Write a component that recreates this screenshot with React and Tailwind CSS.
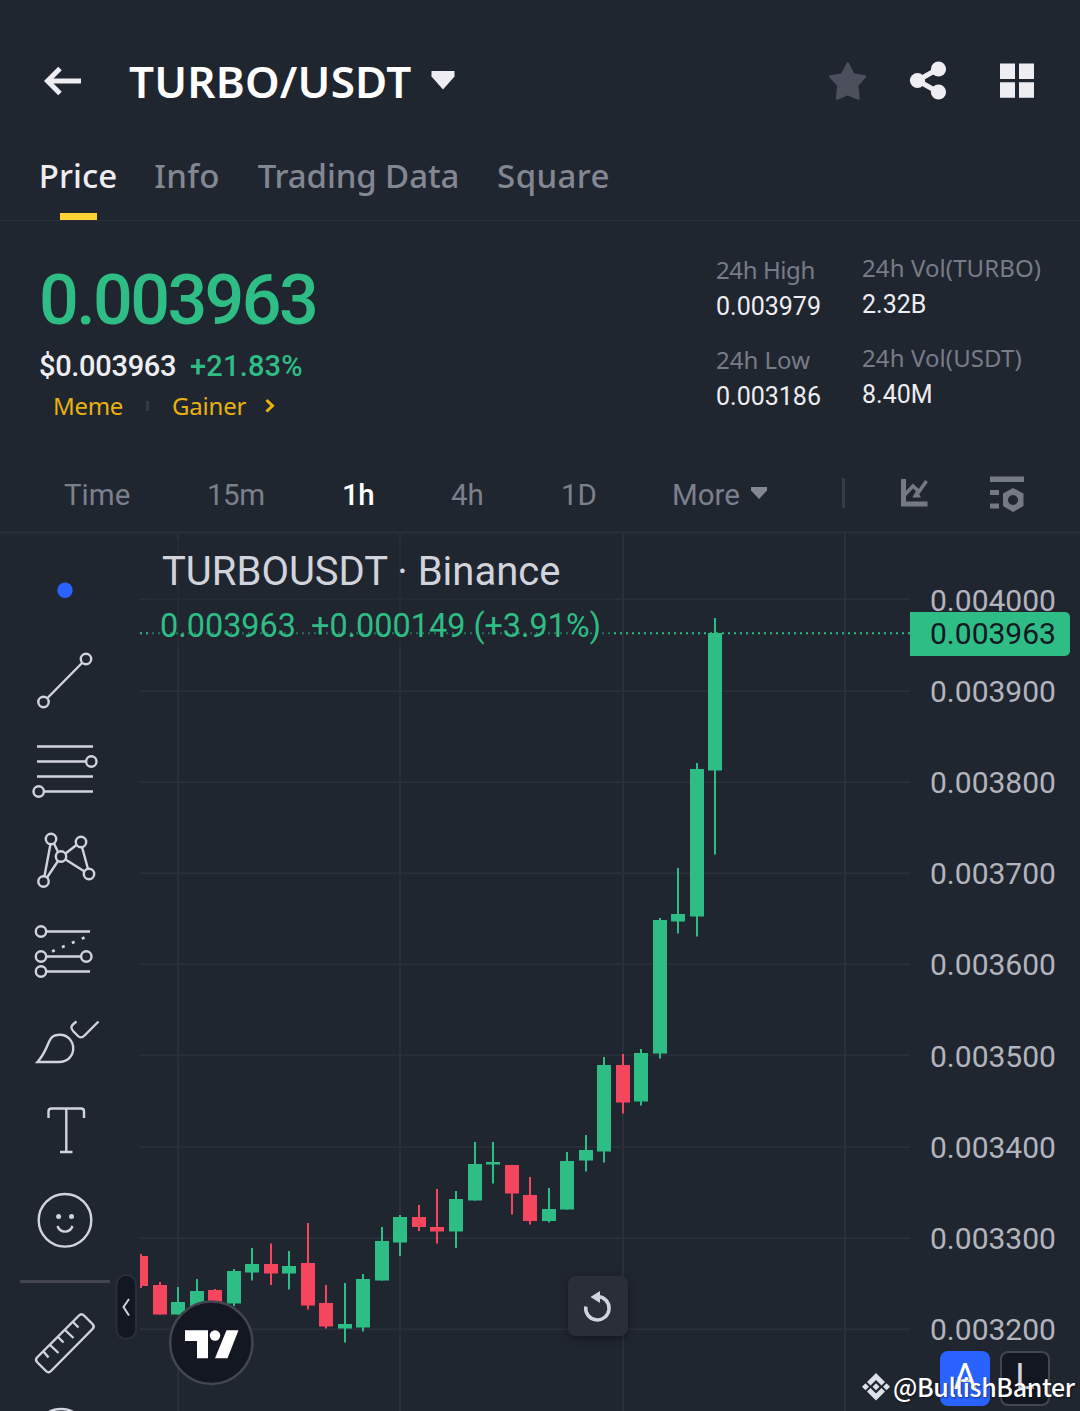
import clsx from "clsx";

const GREEN = "#2ebd85";
const RED = "#f6465d";

// [x, wick top, body top, body bottom, wick bottom, direction]
const candles = [
  [141, 1254, 1256, 1286, 1288, "down"],
  [160, 1282, 1285, 1314.5, 1314.5, "down"],
  [178, 1287, 1302, 1314.5, 1314.5, "up"],
  [197, 1279, 1291, 1308, 1308, "up"],
  [215, 1289, 1290, 1304, 1304, "down"],
  [234, 1269, 1271, 1303.5, 1306, "up"],
  [252, 1248, 1264, 1272.5, 1280.5, "up"],
  [271, 1243.5, 1264, 1273.5, 1285, "down"],
  [289, 1251, 1266, 1273.5, 1289.5, "up"],
  [308, 1223, 1263, 1305.5, 1309.5, "down"],
  [326, 1285, 1303, 1326.5, 1328.5, "down"],
  [345, 1283, 1324, 1328.5, 1342.5, "up"],
  [363, 1274, 1279, 1327.5, 1331.5, "up"],
  [382, 1227, 1241, 1280.5, 1280.5, "up"],
  [400, 1215, 1217, 1242.5, 1256, "up"],
  [419, 1205, 1217, 1227, 1231, "down"],
  [437, 1189, 1227, 1231.5, 1243.5, "down"],
  [456, 1191, 1199, 1231.5, 1248, "up"],
  [475, 1142, 1164, 1200.5, 1200.5, "up"],
  [493, 1142, 1162, 1164.5, 1183.5, "up"],
  [512, 1165, 1165, 1193.5, 1214.5, "down"],
  [530, 1177, 1195, 1221, 1224.5, "down"],
  [549, 1188, 1209, 1221, 1222.5, "up"],
  [567, 1152, 1161, 1209.5, 1209.5, "up"],
  [586, 1135, 1150, 1160.5, 1171.5, "up"],
  [604, 1057, 1065, 1151.5, 1162.5, "up"],
  [623, 1054, 1065, 1102.5, 1113.5, "down"],
  [641, 1049, 1053, 1101.5, 1105.5, "up"],
  [660, 918, 920, 1053.5, 1058.5, "up"],
  [678, 868, 914, 921.5, 933.5, "up"],
  [697, 763, 769, 916.5, 936.5, "up"],
  [715, 618, 633, 770.5, 854.5, "up"],
];

const gridX = [178, 400, 623, 845];
const gridY = [599.4, 691.2, 782.2, 873.2, 964.4, 1055.4, 1147, 1238.2, 1329.2];

const axisLabels = [
  "0.004000",
  "0.003900",
  "0.003800",
  "0.003700",
  "0.003600",
  "0.003500",
  "0.003400",
  "0.003300",
  "0.003200",
];

const tabs = [
  { label: "Price", className: "w-[78px] tracking-[0.1px]", active: true },
  { label: "Info", className: "w-[66px] tracking-[0.3px]" },
  { label: "Trading Data", className: "w-[203px] tracking-[-0.100px]" },
  { label: "Square", className: "w-[113px] tracking-[0.4px]" },
];

const intervals = [
  { label: "Time", className: "w-[143px]" },
  { label: "15m", className: "w-[135px] tracking-[-0.500px]" },
  { label: "1h", className: "w-[109px] tracking-[-0.500px]", active: true },
  { label: "4h", className: "w-[110px]" },
  { label: "1D", className: "w-[111px]" },
];

function Header() {
  return (
    <header className="flex h-[136px] items-center pt-[26px] pl-11">
      <svg className="h-10 w-[38px]" viewBox="44 61 38 40" fill="none" stroke="#ededf2" strokeWidth="5">
        <path d="M81 81H48M60 68.500L47.500 81L60 93.500" />
      </svg>
      <h1 className="ml-[47px] w-[302px] font-['Noto_Sans'] text-[44px] leading-[54px] font-semibold tracking-[0.200px] whitespace-nowrap text-white">
        TURBO/USDT
      </h1>
      <svg className="h-5 w-6" viewBox="431 71 24 20" fill="#ededf2">
        <path d="M431.500 71H454.500V76.500L443 89.500L431.500 76.500Z" />
      </svg>
      <svg className="ml-[373px] h-10 w-10" viewBox="828 61 40 40" fill="#4c505c">
        <path
          d="M847.700 63.500L853.300 74.500L865 76.500L857 85.500L858.500 98.500L847.700 94L837 98.500L838.500 85.500L830.300 76.500L842.200 74.500Z"
          stroke="#4c505c"
          strokeWidth="2.500"
          strokeLinejoin="round"
        />
      </svg>
      <svg className="ml-[41px] h-10 w-10" viewBox="909 61 40 40" fill="#ededf2">
        <path d="M938 69L917.500 80.500L938 92" fill="none" stroke="#ededf2" strokeWidth="5" />
        <circle cx="938.500" cy="69" r="7.600" />
        <circle cx="917.500" cy="80.500" r="7.600" />
        <circle cx="938.500" cy="92" r="7.600" />
      </svg>
      <svg className="ml-[50px] h-10 w-9" viewBox="999 61 36 40" fill="#ededf2">
        <path d="M1000 63.500h15v15.500h-15zM1019 63.500h15v15.500h-15zM1000 82.300h15v15.500h-15zM1019 82.300h15v15.500h-15z" />
      </svg>
    </header>
  );
}

function Tabs() {
  return (
    <nav className="flex h-[85px] gap-[37px] border-b border-[#2b313b] pl-[39px] font-['Noto_Sans'] text-[33px] font-medium">
      {tabs.map((tab) => (
        <div key={tab.label} className={clsx("flex flex-col items-center pt-5", tab.className)}>
          <span className={clsx("leading-10 whitespace-nowrap", tab.active ? "text-[#ededf2]" : "text-[#838792]")}>
            {tab.label}
          </span>
          {tab.active && <span className="mt-[16.500px] h-2 w-[37px] bg-[#fcd535]" />}
        </div>
      ))}
    </nav>
  );
}

function Stat({ label, value, labelClass }) {
  return (
    <div className="whitespace-nowrap">
      <div className={clsx("h-[35px] font-['Noto_Sans'] text-[24px] leading-[33px] text-[#777c88]", labelClass)}>
        {label}
      </div>
      <div className="h-[35px] text-[25px] leading-[37px] text-[#ededf2]">{value}</div>
    </div>
  );
}

function Summary() {
  return (
    <section className="flex h-[239px]">
      <div className="w-[677px] pt-[42px] pl-[39px]">
        <div className="h-[70px] text-[70px] leading-[74px] font-medium tracking-[-2.600px] text-[#2ebd85]">0.003963</div>
        <div className="mt-[15px] flex h-[38px] items-center text-[29px] font-medium whitespace-nowrap">
          <span className="w-[151px] tracking-[-0.300px] text-[#ededf2]">$0.003963</span>
          <span className="tracking-[0.200px] text-[#2ebd85]">+21.83%</span>
        </div>
        <div className="flex h-10 items-center pl-[14px] font-['Noto_Sans'] text-[24px] text-[#e8b20e]">
          <span className="w-[93px] tracking-[-0.300px]">Meme</span>
          <span className="h-[10px] w-[3px] bg-[#343a45]" />
          <span className="ml-[23px] w-[92px] tracking-[-0.200px]">Gainer</span>
          <svg className="h-4 w-3" viewBox="264 398 12 16" fill="none" stroke="#e8b20e" strokeWidth="3">
            <path d="M266.500 400L272.500 405.800L266.500 411.500" />
          </svg>
        </div>
      </div>
      <div className="flex w-[146px] flex-col gap-5 pt-8 pl-[39px]">
        <Stat label="24h High" value="0.003979" labelClass="tracking-[-0.400px]" />
        <Stat label="24h Low" value="0.003186" />
      </div>
      <div className="flex flex-col gap-5 pt-[30px] pl-[39px]">
        <Stat label="24h Vol(TURBO)" value="2.32B" labelClass="tracking-[0.100px]" />
        <Stat label="24h Vol(USDT)" value="8.40M" labelClass="tracking-[0.100px]" />
      </div>
    </section>
  );
}

function Intervals() {
  return (
    <div className="flex h-[71px] items-center pb-px pl-[64px] text-[29.500px] text-[#7b808c]">
      {intervals.map((item) => (
        <span key={item.label} className={clsx(item.className, item.active && "font-medium text-white")}>
          {item.label}
        </span>
      ))}
      <span className="w-[79px]">More</span>
      <svg className="-mt-1 h-3 w-4" viewBox="751 486 16 12" fill="#838792">
        <path d="M751 486H767V489.500L759 498L751 489.500Z" />
      </svg>
      <span className="-mt-1 ml-[75px] h-[30px] w-[3px] bg-[#363c47]" />
      <svg className="-mt-1 ml-[55px] h-8 w-7" viewBox="901 477 28 32" fill="#747985">
        <path d="M902 479h5v22.500h21.500v5H902z" />
        <path d="M906 494.500L914 486L920 491.500L927.500 481" fill="none" stroke="#747985" strokeWidth="3.500" />
        <path d="M917.500 490L922 497.500H913.500Z" />
      </svg>
      <svg className="ml-[61px] h-10 w-9" viewBox="990 475 36 40" fill="#747985">
        <path d="M991 476.500h34v5.500h-34zM991 490h9v5h-9zM991 503.500h9v5h-9z" />
        <path
          fillRule="evenodd"
          d="M1014 488L1024.500 493.500V506L1014 512L1004 506V493.500ZM1014 495a5 5 0 1 0 .01 0Z"
        />
      </svg>
    </div>
  );
}

// One 140x90 slot of the drawing toolbar
function Tool({ y, children }) {
  return (
    <svg
      className="h-[90px] w-[140px] shrink-0"
      viewBox={`0 ${y} 140 90`}
      fill="none"
      stroke="#d1d4dc"
      strokeWidth="2.400"
    >
      {children}
    </svg>
  );
}

function DrawingTools() {
  return (
    <aside className="relative flex w-[140px] flex-col overflow-hidden pt-[11px]">
      <Tool y={545}>
        <circle cx="65" cy="590.300" r="7.700" fill="#2962ff" stroke="none" />
      </Tool>
      <Tool y={635}>
        <circle cx="86" cy="659" r="5.200" />
        <circle cx="43.500" cy="702" r="5.200" />
        <path d="M47.500 698L82 663" />
      </Tool>
      <Tool y={725}>
        <path d="M37 746.500H93M37 761.500H86M37 776.500H93M44 791.500H93" />
        <circle cx="91.300" cy="761.500" r="5.200" />
        <circle cx="38.700" cy="791.500" r="5.200" />
      </Tool>
      <Tool y={815}>
        <circle cx="51" cy="839" r="5.200" />
        <circle cx="81" cy="842" r="5.200" />
        <circle cx="61" cy="856.500" r="5.200" />
        <circle cx="89" cy="874" r="5.200" />
        <circle cx="43.500" cy="881.500" r="5.200" />
        <path d="M50.500 844L44.500 876M54 843.500L58 852M76.500 845L65.500 853.500M82 847L88 869M65.500 859.500L84.500 871.500M58 861L47 877.500" />
      </Tool>
      <Tool y={905}>
        <path d="M47 931.500H90M47 956.500H81M47 971.500H90" />
        <circle cx="41" cy="931.500" r="5.200" />
        <circle cx="41" cy="956.500" r="5.200" />
        <circle cx="86.300" cy="956.500" r="5.200" />
        <circle cx="41" cy="971.500" r="5.200" />
        <path d="M52 951.500L87 936.500" strokeDasharray="3 7.800" strokeWidth="2.700" />
      </Tool>
      <Tool y={995}>
        <path d="M37.500 1062H59C68 1062 73.200 1055.500 73.200 1048.500C73.200 1041 67.500 1034.700 60 1034.700C46 1034.700 51.500 1046 37.500 1062Z" />
        <path d="M76.500 1021.500C70 1026 70.500 1028.500 73.500 1031.500L77.500 1035.500C80 1038 82 1038 84.500 1035.500L98.500 1021.500" />
      </Tool>
      <Tool y={1085}>
        <path d="M48.500 1118V1111.500Q48.500 1108.500 51.500 1108.500H81Q84 1108.500 84 1111.500V1118M66.300 1109V1152M60 1152H72.500" />
      </Tool>
      <Tool y={1175}>
        <circle cx="65" cy="1220.300" r="26.300" />
        <circle cx="58.600" cy="1216.500" r="2.500" fill="#d1d4dc" stroke="none" />
        <circle cx="71.500" cy="1216.500" r="2.500" fill="#d1d4dc" stroke="none" />
        <path d="M57.500 1226C60 1233.500 70 1233.500 72.500 1226" />
      </Tool>
      <div className="flex h-[33px] shrink-0 justify-center pt-[15px] pr-[10px]">
        <div className="h-[3px] w-[90px] bg-[#434651]" />
      </div>
      <Tool y={1298}>
        <path d="M37 1357.500L79 1315.500Q81.500 1313 84 1315.500L92.500 1324Q95 1326.500 92.500 1329L51 1371Q48.500 1373.500 46 1371L37 1362Q35 1359.500 37 1357.500Z" />
        <path d="M43.500 1351.500L48.500 1357.500M50 1345L58.500 1353M58 1337L63.500 1342.500M65 1330L73.500 1338M73 1322L78.500 1327.500" />
      </Tool>
      <Tool y={1388}>
        <circle cx="61" cy="1435" r="26" />
      </Tool>
      <svg className="absolute top-[739px] left-[115px] h-[68px] w-[23px]" viewBox="115 1273 23 68">
        <rect x="116.500" y="1275" width="19.500" height="64" rx="9.500" fill="#131722" stroke="#2a2e39" strokeWidth="2" />
        <path d="M129 1299L123.500 1307L129 1315.500" fill="none" stroke="#d1d4dc" strokeWidth="2" />
      </svg>
    </aside>
  );
}

function Chart() {
  return (
    <div className="relative w-[770px] overflow-hidden">
      <svg className="h-[877px] w-[770px]" viewBox="140 534 770 877">
        {gridX.map((x) => (
          <rect key={x} x={x - 1} y="534" width="2" height="877" fill="#2a303a" />
        ))}
        {gridY.map((y) => (
          <rect key={y} x="140" y={y - 0.9} width="770" height="1.8" fill="#2a303a" />
        ))}
        <path d="M140 633.200H910" stroke={GREEN} strokeWidth="2" strokeDasharray="2 4" />
        <rect x="150" y="540" width="464" height="108" fill="#202630" opacity="0.500" />
        {candles.map(([x, high, top, bottom, low, dir]) => (
          <g key={x} fill={dir === "up" ? GREEN : RED}>
            <rect x={x - 1} y={high} width="2" height={low - high} />
            <rect x={x - 7} y={top} width="14" height={bottom - top} />
          </g>
        ))}
      </svg>

      <div className="absolute top-3 left-[22px] whitespace-nowrap">
        <div className="text-[40px] leading-[52px] text-[#d1d4dc]">TURBOUSDT · Binance</div>
        <div className="-ml-[2px] flex text-[32.400px] leading-[56px] text-[#2ebd85]">
          <span className="w-[151px]">0.003963</span>
          <span>+0.000149 (+3.91%)</span>
        </div>
      </div>

      {/* TradingView badge */}
      <svg className="absolute top-[765px] left-[28px] h-[88px] w-[88px]" viewBox="168 1299 88 88">
        <circle cx="211.300" cy="1342.800" r="41.200" fill="#131722" stroke="#434651" strokeWidth="2.500" />
        <path
          d="M185 1330.300H208V1358.300H197V1341H185ZM226.500 1330.300H238.500L227.500 1358.300H215Z"
          fill="#fff"
        />
        <circle cx="215" cy="1335.500" r="5.200" fill="#fff" />
      </svg>

      <button className="absolute top-[742px] left-[428px] flex h-[60px] w-[60px] items-center justify-center rounded-lg bg-[#2a2e39] shadow-[0_3px_8px_rgba(0,0,0,0.400)]">
        <svg className="h-[34px] w-[34px]" viewBox="581 1289 34 34">
          <path d="M585.800 1306.500A11.700 11.700 0 1 0 598 1296.500" fill="none" stroke="#d1d4dc" strokeWidth="3.500" />
          <path d="M600 1291V1303L590.500 1297Z" fill="#d1d4dc" />
        </svg>
      </button>
    </div>
  );
}

function PriceAxis() {
  return (
    <div className="relative w-[170px] pt-[21px] text-[30px] text-[#b2b5be]">
      {axisLabels.map((label) => (
        <div key={label} className="flex h-[91.100px] items-center pl-5">
          {label}
        </div>
      ))}
      <div className="absolute top-[77.500px] left-0 flex h-11 w-40 items-center rounded-r-[5px] bg-[#2ebd85] pl-5 text-[#131722]">
        0.003963
      </div>
      <div className="absolute top-[817px] left-[30px] flex gap-[10px] text-[36px] text-[#d1d4dc]">
        <div className="flex h-[55px] w-[50px] items-center justify-center rounded-lg bg-[#2962ff] pb-1 text-white">A</div>
        <div className="flex h-[55px] w-[50px] items-center justify-center rounded-lg border-2 border-[#434651] bg-[#131722] pb-1">
          L
        </div>
      </div>
    </div>
  );
}

function Watermark() {
  return (
    <div className="absolute top-[1367px] left-[861px] flex h-10 items-center whitespace-nowrap text-white">
      <svg className="h-[30px] w-[30px]" viewBox="861 1372 30 30" fill="#dfe1e8">
        <path d="M876 1373L885 1382L881.500 1385.500L876 1380L870.500 1385.500L867 1382ZM876 1400.500L885 1391.500L881.500 1388L876 1393.500L870.500 1388L867 1391.500ZM876 1383.300L879.500 1386.800L876 1390.300L872.500 1386.800ZM865.500 1383.300L869 1386.800L865.500 1390.300L862 1386.800ZM886.500 1383.300L890 1386.800L886.500 1390.300L883 1386.800Z" />
      </svg>
      <span className="ml-[2px] pb-[3px] font-['Noto_Sans_CJK_SC'] text-[25px] leading-9 font-medium tracking-[-0.350px] [text-shadow:1px_1px_2px_rgba(0,0,0,0.500)]">
        @BullishBanter
      </span>
    </div>
  );
}

export default function App() {
  return (
    <div className="relative h-[1411px] w-[1080px] overflow-hidden bg-[#202630] font-['Roboto',sans-serif]">
      <Header />
      <Tabs />
      <Summary />
      <Intervals />
      <main className="flex h-[880px] border-t-[3px] border-[#272d37]">
        <DrawingTools />
        <Chart />
        <PriceAxis />
      </main>
      <Watermark />
    </div>
  );
}
